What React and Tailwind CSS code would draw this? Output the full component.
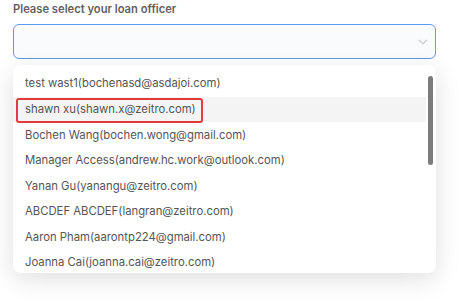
import React from "react";

const officers = [
    "test wast1(bochenasd@asdajoi.com)",
    "shawn xu(shawn.x@zeitro.com)",
    "Bochen Wang(bochen.wong@gmail.com)",
    "Manager Access(andrew.hc.work@outlook.com)",
    "Yanan Gu(yanangu@zeitro.com)",
    "ABCDEF ABCDEF(langran@zeitro.com)",
    "Aaron Pham(aarontp224@gmail.com)",
    "Joanna Cai(joanna.cai@zeitro.com)",
];

export default function App() {
    return (
        <div className="w-[474px] h-[305px] bg-white font-['Inter',sans-serif] overflow-hidden">
            <div className="w-[423px] ml-[13px] pt-[1px]">
                {/* Label */}
                <div className="text-[11.2px] font-semibold text-[#5f5f5f] leading-[16px]">
                    Please select your loan officer
                </div>

                {/* Select */}
                <div className="mt-[7px] h-[35px] rounded-[6px] border-[1.5px] border-[#5e9cec] bg-[#fafbfc] flex items-center justify-end pr-[7px]">
                    <svg width="10" height="6" viewBox="0 0 10 6" fill="none">
                        <path d="M1 0.8l4 4 4-4" stroke="#c4c4c4" strokeWidth="1.1" />
                    </svg>
                </div>

                {/* Dropdown */}
                <div className="relative mt-[6px] h-[208px] rounded-[8px] bg-white shadow-[0_6px_26px_rgba(0,0,0,0.13)] overflow-hidden pt-[6px] pr-[10px]">
                    {officers.map((o, i) => (
                        <div
                            key={o}
                            className={
                                i === 1
                                    ? "relative h-[25.6px] flex items-center pl-[12px] text-[11.3px] text-[#555] bg-[#f4f4f4]"
                                    : "relative h-[25.6px] flex items-center pl-[12px] text-[11.3px] text-[#555]"
                            }
                        >
                            {o}
                            {i === 1 && (
                                <div className="absolute left-[3px] top-[1px] w-[187px] h-[25px] border-2 border-[#e23b3b] rounded-[3px]" />
                            )}
                        </div>
                    ))}
                    {/* Scrollbar */}
                    <div className="absolute right-[3px] top-[11px] w-[5px] h-[89px] rounded-full bg-[#7c7c7c]" />
                </div>
            </div>
        </div>
    );
}
